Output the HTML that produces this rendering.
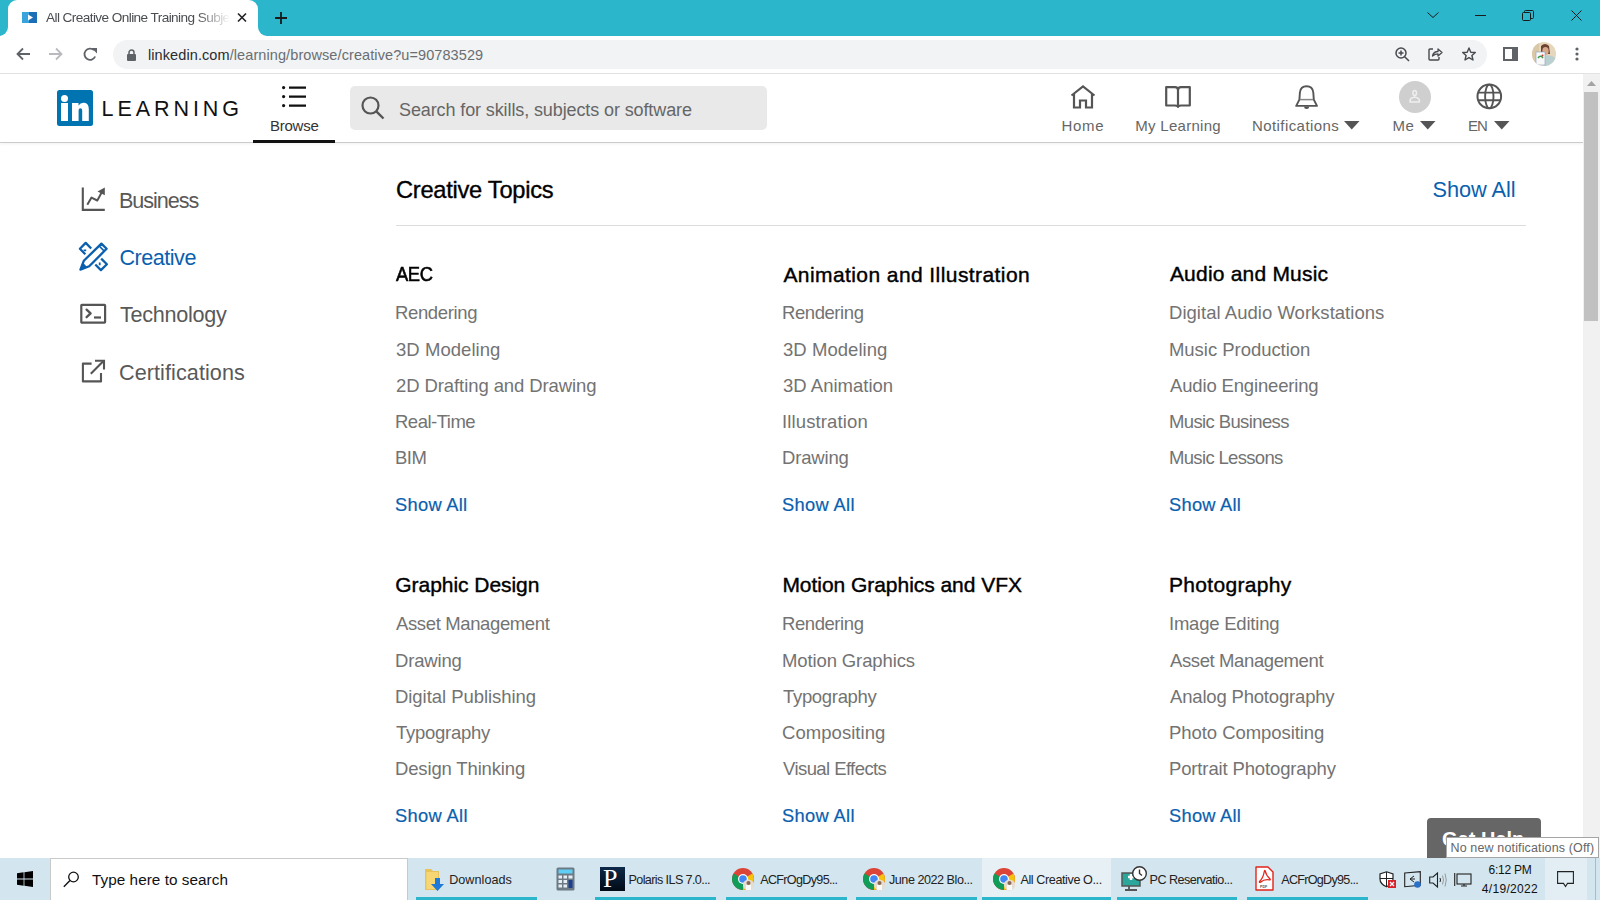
<!DOCTYPE html>
<html><head><meta charset="utf-8">
<style>
*{margin:0;padding:0;box-sizing:border-box}
html,body{width:1600px;height:900px;overflow:hidden;background:#fff;font-family:"Liberation Sans",sans-serif}
.a{position:absolute;white-space:nowrap}
svg{position:absolute;overflow:visible}
/* chrome */
#tabbar{position:absolute;left:0;top:0;width:1600px;height:36px;background:#2bb6cc}
#tab{position:absolute;left:8px;top:0;width:250px;height:36px;background:#fff;border-radius:9px 9px 0 0}
.foot{position:absolute;top:27px;width:9px;height:9px;background:#fff}
.foot i{position:absolute;left:0;top:0;width:9px;height:9px;background:#2bb6cc}
#toolbar{position:absolute;left:0;top:36px;width:1600px;height:38px;background:#fff;border-bottom:1px solid #e2e3e5}
#omni{position:absolute;left:113px;top:40px;width:1374px;height:29px;background:#f1f3f4;border-radius:14.5px}
/* header */
#hdr{position:absolute;left:0;top:74px;width:1583px;height:69px;background:#fff;border-bottom:1px solid #cbcbcb;box-shadow:0 1px 3px rgba(0,0,0,.06)}
.nav{color:#666;font-size:15px;line-height:15px}
.side{color:#595959;font-size:21.6px;line-height:22px}
.h1{color:#000;font-size:23.7px;line-height:24px;-webkit-text-stroke:.35px #000}
.h2{color:#000;font-size:21px;line-height:21px;-webkit-text-stroke:.4px #000}
.it{color:#737373;font-size:18.5px;line-height:19px}
.sa{color:#0a5fae;font-size:18.3px;line-height:19px;-webkit-text-stroke:.2px #0a5fae}
/* taskbar */
#task{position:absolute;left:0;top:858px;width:1600px;height:42px;background:#d3e5ee}
.tb{color:#222;font-size:12.6px;line-height:13px}
.ul{position:absolute;top:897px;height:3px;background:#2bb6cc}
</style></head><body>

<!-- ===== Chrome tab bar ===== -->
<div id="tabbar"></div>
<div id="tab"></div>
<div class="foot" style="left:-1px"><i style="border-radius:0 0 9px 0"></i></div>
<div class="foot" style="left:258px"><i style="border-radius:0 0 0 9px"></i></div>
<!-- favicon -->
<div class="a" style="left:22px;top:12px;width:15px;height:11px;background:linear-gradient(90deg,#3aa3dc 0 50%,#1c6fb6 50%)"></div>
<svg style="left:22px;top:12px" width="15" height="11"><path d="M6 2.5 L11 5.5 L6 8.5Z" fill="#fff"/></svg>
<div id="tabt" class="a" style="left:46px;top:9.6px;font-size:13.6px;line-height:15px;color:#4a4d51;width:184px;overflow:hidden;letter-spacing:-0.58px;-webkit-mask-image:linear-gradient(90deg,#000 82%,transparent)"><span id="tabt2">All Creative Online Training</span> Subjects</div>
<svg style="left:237px;top:13px" width="10" height="9"><path d="M1 0.5 L9 8.5 M9 0.5 L1 8.5" stroke="#202124" stroke-width="1.6"/></svg>
<svg style="left:275px;top:12px" width="12" height="12"><path d="M6 0 V12 M0 6 H12" stroke="#1a1a1a" stroke-width="1.8"/></svg>
<!-- window controls -->
<svg style="left:1427px;top:12px" width="12" height="6"><path d="M0.5 0.5 L6 5.5 L11.5 0.5" stroke="#1a1a1a" stroke-width="1" fill="none"/></svg>
<div class="a" style="left:1475px;top:15px;width:11px;height:1px;background:#1a1a1a"></div>
<svg style="left:1522px;top:10px" width="12" height="11"><rect x="0.5" y="2.5" width="8" height="8" rx="1" stroke="#1a1a1a" fill="none"/><path d="M2.5 2.5 V1.5 Q2.5 0.5 3.5 0.5 H10.5 Q11.5 0.5 11.5 1.5 V7.5 Q11.5 8.5 10.5 8.5 H8.5" stroke="#1a1a1a" fill="none"/></svg>
<svg style="left:1571px;top:10px" width="11" height="11"><path d="M0.5 0.5 L10.5 10.5 M10.5 0.5 L0.5 10.5" stroke="#1a1a1a" stroke-width="1"/></svg>

<!-- ===== Toolbar ===== -->
<div id="toolbar"></div>
<svg style="left:16px;top:47px" width="14" height="14"><path d="M14 7 H2 M7 1.5 L1.5 7 L7 12.5" stroke="#5f6368" stroke-width="1.8" fill="none"/></svg>
<svg style="left:49px;top:47px" width="14" height="14"><path d="M0 7 H12 M7 1.5 L12.5 7 L7 12.5" stroke="#b8babd" stroke-width="1.8" fill="none"/></svg>
<svg style="left:83px;top:47px" width="15" height="15"><path d="M12.2 9.5 A5.6 5.6 0 1 1 11 3.2" stroke="#5f6368" stroke-width="1.8" fill="none"/><path d="M8.5 1 H14 V6.5Z" fill="#5f6368"/></svg>
<div id="omni"></div>
<svg style="left:127px;top:49px" width="9" height="12"><path d="M2 5 V3.5 A2.5 2.5 0 0 1 7 3.5 V5" stroke="#5f6368" stroke-width="1.5" fill="none"/><rect x="0" y="5" width="9" height="7" rx="1" fill="#5f6368"/></svg>
<div id="url" class="a" style="left:148.00px;top:47.00px;font-size:14.5px;line-height:16px;color:#2a2c2f;letter-spacing:0.09px">linkedin.com<span style="color:#6a6e72">/learning/browse/creative?u=90783529</span></div>
<!-- right toolbar icons -->
<svg style="left:1395px;top:47px" width="15" height="15"><circle cx="6" cy="6" r="5" stroke="#474a4e" stroke-width="1.5" fill="none"/><path d="M6 3.5 V8.5 M3.5 6 H8.5 M9.7 9.7 L14 14" stroke="#474a4e" stroke-width="1.5"/></svg>
<svg style="left:1428px;top:47px" width="15" height="14"><path d="M5 2 H2 Q1 2 1 3 V12 Q1 13 2 13 H10 Q11 13 11 12 V10" stroke="#474a4e" stroke-width="1.4" fill="none"/><path d="M4.5 9 Q5.5 4.5 10 4.5 V2 L14 5.5 L10 9 V6.8 Q7 6.8 4.5 9Z" stroke="#474a4e" stroke-width="1.3" fill="none" stroke-linejoin="round"/></svg>
<svg style="left:1462px;top:47px" width="14" height="14"><path d="M7 1 L8.8 5.2 L13.3 5.5 L9.9 8.5 L11 13 L7 10.6 L3 13 L4.1 8.5 L0.7 5.5 L5.2 5.2Z" stroke="#474a4e" stroke-width="1.4" fill="none" stroke-linejoin="round"/></svg>
<svg style="left:1503px;top:47px" width="15" height="14"><rect x="1" y="1" width="13" height="12" stroke="#5f6368" stroke-width="2" fill="none"/><rect x="9" y="1" width="5" height="12" fill="#5f6368"/></svg>
<svg style="left:1532px;top:42px" width="24" height="24"><defs><clipPath id="av"><circle cx="12" cy="12" r="12"/></clipPath></defs><g clip-path="url(#av)"><rect width="24" height="24" fill="#e6d6bb"/><rect x="0" y="0" width="7" height="24" fill="#d9c7a6"/><path d="M9 4 Q13 0 17 4 L18 12 L9 12Z" fill="#6b4330"/><ellipse cx="13.5" cy="9" rx="3.2" ry="4" fill="#d9a88a"/><path d="M12 14 Q18 12 24 16 V24 H12Z" fill="#b9cfd0"/><rect x="4" y="10" width="9" height="13" fill="#f8f8f8" stroke="#8aa0c0" stroke-width="0.6"/><path d="M6 16 Q8.5 12.5 11 16" stroke="#3f9a4a" stroke-width="1.5" fill="none"/><circle cx="10.5" cy="13.5" r="1" fill="#c33"/></g></svg>
<svg style="left:1575px;top:47px" width="4" height="14"><circle cx="2" cy="2" r="1.6" fill="#5f6368"/><circle cx="2" cy="7" r="1.6" fill="#5f6368"/><circle cx="2" cy="12" r="1.6" fill="#5f6368"/></svg>

<!-- ===== LinkedIn header ===== -->
<div id="hdr"></div>
<div class="a" style="left:57px;top:90px;width:36px;height:36px;background:#0073b1;border-radius:2.5px"></div>
<div class="a" style="left:61px;top:95px;width:7px;height:7px;border-radius:50%;background:#fff"></div>
<div class="a" style="left:61px;top:103px;width:7px;height:18px;background:#fff"></div>
<svg style="left:72px;top:102px" width="17" height="19"><path d="M0 1 H6.5 V3.5 Q8.5 0.5 12 0.8 Q16.8 1.2 16.8 7 V19 H10.2 V8.5 Q10.2 6.2 8.3 6.2 Q6.6 6.2 6.6 8.5 V19 H0Z" fill="#fff"/></svg>
<div id="learning" class="a" style="left:101.50px;top:97.10px;font-size:21.5px;line-height:24px;color:#111;letter-spacing:3.94px">LEARNING</div>
<!-- browse -->
<svg style="left:282px;top:86px" width="24" height="22"><circle cx="1.6" cy="1.6" r="1.6" fill="#111"/><circle cx="1.6" cy="10.6" r="1.6" fill="#111"/><circle cx="1.6" cy="19.6" r="1.6" fill="#111"/><path d="M7 1.6 H24 M7 10.6 H24 M7 19.6 H24" stroke="#111" stroke-width="2.2"/></svg>
<div id="browse" class="a nav" style="left:270.00px;top:117.60px;color:#333;letter-spacing:-0.25px">Browse</div>
<div class="a" style="left:253px;top:140px;width:82px;height:2.5px;background:#111"></div>
<!-- search -->
<div class="a" style="left:350px;top:86px;width:417px;height:44px;background:#e9e9e9;border-radius:5px"></div>
<svg style="left:361px;top:96px" width="24" height="24"><circle cx="9.5" cy="9.5" r="8" stroke="#555" stroke-width="2.2" fill="none"/><path d="M15.3 15.3 L22.5 22.5" stroke="#555" stroke-width="2.4"/></svg>
<div id="search" class="a" style="left:399.00px;top:100.60px;font-size:18px;line-height:19px;color:#666;letter-spacing:-0.11px">Search for skills, subjects or software</div>
<!-- right nav -->
<svg style="left:1070px;top:85px" width="26" height="24"><path d="M1.5 10.5 L13 1.5 L24.5 10.5 M4 8.5 V22.5 H10 V15.5 H16 V22.5 H22 V8.5" stroke="#555" stroke-width="2.2" fill="none" stroke-linejoin="miter"/></svg>
<div id="home" class="a nav" style="left:1061.50px;top:117.60px;letter-spacing:0.67px">Home</div>
<svg style="left:1165px;top:86px" width="26" height="22"><path d="M1.2 1.2 H10 Q13 1.2 13 4 V21 Q13 19.5 10 19.5 H1.2Z M24.8 1.2 H16 Q13 1.2 13 4 V21 Q13 19.5 16 19.5 H24.8Z" stroke="#555" stroke-width="2.2" fill="none" stroke-linejoin="round"/></svg>
<div id="myl" class="a nav" style="left:1135.25px;top:117.60px;letter-spacing:0.29px">My Learning</div>
<svg style="left:1295px;top:85px" width="24" height="25"><path d="M4.4 14.6 L4.9 7.5 Q5.6 1.3 11.6 1.3 Q17.6 1.3 18.3 7.5 L18.8 14.6 L22 20.9 H1.2 Z" stroke="#555" stroke-width="1.9" fill="none" stroke-linejoin="round"/><path d="M5 14.6 H18.2" stroke="#888" stroke-width="1.5"/><path d="M9.1 21.6 A2.5 2.5 0 0 0 14.1 21.6 Z" fill="#555"/></svg>
<div id="notif" class="a nav" style="left:1252.00px;top:117.60px;letter-spacing:0.42px">Notifications</div>
<svg style="left:1344px;top:121px" width="16" height="9"><path d="M0 0 H15.5 L7.75 8.5Z" fill="#555"/></svg>
<div class="a" style="left:1399px;top:81px;width:32px;height:32px;border-radius:50%;background:#cfcfcf"></div>
<svg style="left:1399px;top:81px" width="32" height="32"><ellipse cx="15.7" cy="12.1" rx="1.8" ry="2.5" stroke="#efefef" stroke-width="1.5" fill="none"/><path d="M11 21 Q10.6 17.5 13.5 16.6 L15.7 16 L17.9 16.6 Q20.8 17.5 20.4 21Z" stroke="#efefef" stroke-width="1.5" fill="none" stroke-linejoin="round"/></svg>
<div id="me" class="a nav" style="left:1392.50px;top:117.60px;letter-spacing:0.50px">Me</div>
<svg style="left:1420px;top:121px" width="16" height="9"><path d="M0 0 H15.5 L7.75 8.5Z" fill="#555"/></svg>
<svg style="left:1476px;top:83px" width="27" height="27"><circle cx="13.3" cy="13.4" r="11.8" stroke="#555" stroke-width="2" fill="none"/><ellipse cx="13.3" cy="13.4" rx="4.2" ry="11.8" stroke="#555" stroke-width="1.9" fill="none"/><path d="M2.2 9.6 H24.4 M2.2 17.2 H24.4" stroke="#555" stroke-width="1.9"/></svg>
<div id="en" class="a nav" style="left:1468.00px;top:117.60px;letter-spacing:-1.00px">EN</div>
<svg style="left:1494px;top:121px" width="16" height="9"><path d="M0 0 H15.5 L7.75 8.5Z" fill="#555"/></svg>

<!-- scrollbar -->
<div class="a" style="left:1583px;top:74px;width:17px;height:784px;background:#f1f1f1"></div>
<svg style="left:1587px;top:81px" width="9" height="5"><path d="M0 5 L4.5 0 L9 5Z" fill="#a3a3a3"/></svg>
<div class="a" style="left:1584px;top:92px;width:14px;height:229px;background:#c1c1c1"></div>

<!-- ===== Sidebar ===== -->
<svg style="left:81px;top:187px" width="25" height="24"><path d="M1.8 0.6 V22.9 H23.8" stroke="#555" stroke-width="2.1" fill="none"/><path d="M6.3 17.8 L10.5 10.6 L16.3 13.5 L20.5 5.8" stroke="#555" stroke-width="2" fill="none" stroke-linejoin="round"/><path d="M16.5 4.4 L23.8 0.4 L23.8 8.2 Z" fill="#555"/></svg>
<div id="s_bus" class="a side" style="left:119.00px;top:189.75px;letter-spacing:-1.05px">Business</div>
<svg style="left:76px;top:238px" width="36" height="38"><g stroke="#0a5fae" stroke-width="2.3" fill="none" stroke-linejoin="round"><path d="M15.2 10.5 L9.7 4.9 L3.9 10.8 L9.3 16.3"/><path d="M25.2 20.6 L30.9 26.2 L24.9 32.1 L19.3 26.5"/><path d="M7.6 12.4 H10.2 M23.7 24.6 V27.3" stroke-width="1.8"/><path d="M25.4 5.6 L30.6 10.8 L13.2 28.2 L4.4 31.6 L7.8 22.8 Z"/><path d="M23.2 8 L28.3 13.1" stroke-width="1.6"/></g><path d="M4.2 31.8 L6.8 24.6 L11.4 29.2 Z" fill="#0a5fae"/></svg>
<div id="s_cre" class="a side" style="left:119.50px;top:247.00px;color:#0a5fae;letter-spacing:-0.50px">Creative</div>
<svg style="left:80px;top:303px" width="27" height="22"><rect x="1.3" y="1.8" width="23.8" height="17.8" rx="0.6" stroke="#555" stroke-width="2.2" fill="none"/><path d="M6.6 6.6 L10.6 10.4 L6.6 14.2" stroke="#555" stroke-width="2.3" fill="none" stroke-linecap="round" stroke-linejoin="round"/><path d="M14 14.5 H21" stroke="#555" stroke-width="2.2"/></svg>
<div id="s_tec" class="a side" style="left:120.00px;top:304.25px;letter-spacing:-0.28px">Technology</div>
<svg style="left:82px;top:360px" width="24" height="24"><path d="M9.6 3.6 H0.9 V21.4 H19 V13" stroke="#555" stroke-width="2.1" fill="none" stroke-linejoin="round"/><path d="M8.8 13.8 L21 1.6" stroke="#555" stroke-width="2.1"/><path d="M13 0.7 H22 V9.6" stroke="#555" stroke-width="2.1" fill="none"/></svg>
<div id="s_cer" class="a side" style="left:119.00px;top:361.75px;letter-spacing:0.08px">Certifications</div>

<!-- ===== Main ===== -->
<div id="ctopics" class="a h1" style="left:396.00px;top:178.30px;letter-spacing:-0.28px">Creative Topics</div>
<div id="satop" class="a" style="left:1432.50px;top:179.10px;font-size:21.8px;line-height:22px;color:#0a5fae;letter-spacing:-0.09px">Show All</div>
<div class="a" style="left:396px;top:225px;width:1130px;height:1px;background:#dcdcdc"></div>

<div id="cols">
<div id="h0" class="a h2" style="left:396px;top:263.30px;letter-spacing:-0.5px;transform:scaleX(0.875);transform-origin:0 0;-webkit-text-stroke:.6px #000">AEC</div>
<div id="i0_0" class="a it" style="left:395.00px;top:303.40px;letter-spacing:-0.36px">Rendering</div>
<div id="i0_1" class="a it" style="left:396.00px;top:339.51px;letter-spacing:0.05px">3D Modeling</div>
<div id="i0_2" class="a it" style="left:396.00px;top:375.61px;letter-spacing:-0.09px">2D Drafting and Drawing</div>
<div id="i0_3" class="a it" style="left:395.00px;top:411.71px;letter-spacing:-0.50px">Real-Time</div>
<div id="i0_4" class="a it" style="left:395.00px;top:447.80px;letter-spacing:-0.50px">BIM</div>
<div id="sa0" class="a sa" style="left:395.00px;top:494.61px;letter-spacing:0.29px">Show All</div>
<div id="h1" class="a h2" style="left:783.40px;top:263.50px;letter-spacing:0.42px">Animation and Illustration</div>
<div id="i1_0" class="a it" style="left:782.00px;top:303.40px;letter-spacing:-0.43px">Rendering</div>
<div id="i1_1" class="a it" style="left:783.00px;top:339.51px;letter-spacing:0.05px">3D Modeling</div>
<div id="i1_2" class="a it" style="left:783.00px;top:375.61px;letter-spacing:0.01px">3D Animation</div>
<div id="i1_3" class="a it" style="left:782.00px;top:411.71px;letter-spacing:0.13px">Illustration</div>
<div id="i1_4" class="a it" style="left:782.00px;top:447.80px;letter-spacing:-0.18px">Drawing</div>
<div id="sa1" class="a sa" style="left:782.00px;top:494.61px;letter-spacing:0.35px">Show All</div>
<div id="h2" class="a h2" style="left:1169.90px;top:263.40px;letter-spacing:0.21px">Audio and Music</div>
<div id="i2_0" class="a it" style="left:1169.00px;top:303.40px;letter-spacing:0.03px">Digital Audio Workstations</div>
<div id="i2_1" class="a it" style="left:1169.00px;top:339.51px;letter-spacing:-0.04px">Music Production</div>
<div id="i2_2" class="a it" style="left:1170.00px;top:375.61px;letter-spacing:-0.16px">Audio Engineering</div>
<div id="i2_3" class="a it" style="left:1169.00px;top:411.71px;letter-spacing:-0.62px">Music Business</div>
<div id="i2_4" class="a it" style="left:1169.00px;top:447.80px;letter-spacing:-0.67px">Music Lessons</div>
<div id="sa2" class="a sa" style="left:1169.00px;top:494.61px;letter-spacing:0.26px">Show All</div>
<div id="h3" class="a h2" style="left:395.30px;top:574.21px;letter-spacing:-0.05px">Graphic Design</div>
<div id="i3_0" class="a it" style="left:396.00px;top:614.40px;letter-spacing:-0.37px">Asset Management</div>
<div id="i3_1" class="a it" style="left:395.00px;top:650.51px;letter-spacing:-0.18px">Drawing</div>
<div id="i3_2" class="a it" style="left:395.00px;top:686.61px;letter-spacing:-0.05px">Digital Publishing</div>
<div id="i3_3" class="a it" style="left:396.00px;top:722.71px;letter-spacing:-0.28px">Typography</div>
<div id="i3_4" class="a it" style="left:395.00px;top:758.80px;letter-spacing:-0.15px">Design Thinking</div>
<div id="sa3" class="a sa" style="left:395.00px;top:805.61px;letter-spacing:0.35px">Show All</div>
<div id="h4" class="a h2" style="left:782.40px;top:574.21px;letter-spacing:-0.04px">Motion Graphics and VFX</div>
<div id="i4_0" class="a it" style="left:782.00px;top:614.40px;letter-spacing:-0.43px">Rendering</div>
<div id="i4_1" class="a it" style="left:782.00px;top:650.51px;letter-spacing:-0.12px">Motion Graphics</div>
<div id="i4_2" class="a it" style="left:783.00px;top:686.61px;letter-spacing:-0.32px">Typography</div>
<div id="i4_3" class="a it" style="left:782.00px;top:722.71px;letter-spacing:0.05px">Compositing</div>
<div id="i4_4" class="a it" style="left:783.00px;top:758.80px;letter-spacing:-0.58px">Visual Effects</div>
<div id="sa4" class="a sa" style="left:782.00px;top:805.61px;letter-spacing:0.35px">Show All</div>
<div id="h5" class="a h2" style="left:1168.90px;top:574.21px;letter-spacing:0.33px">Photography</div>
<div id="i5_0" class="a it" style="left:1169.00px;top:614.40px;letter-spacing:-0.22px">Image Editing</div>
<div id="i5_1" class="a it" style="left:1170.00px;top:650.51px;letter-spacing:-0.39px">Asset Management</div>
<div id="i5_2" class="a it" style="left:1170.00px;top:686.61px;letter-spacing:-0.18px">Analog Photography</div>
<div id="i5_3" class="a it" style="left:1169.00px;top:722.71px;letter-spacing:-0.06px">Photo Compositing</div>
<div id="i5_4" class="a it" style="left:1169.00px;top:758.80px;letter-spacing:-0.14px">Portrait Photography</div>
<div id="sa5" class="a sa" style="left:1169.00px;top:805.61px;letter-spacing:0.26px">Show All</div>
</div><!--endcols-->

<!-- Get help + tooltip -->
<div class="a" style="left:1427px;top:818px;width:114px;height:40px;background:#666;border-radius:4px 4px 0 0"></div>
<div class="a" style="left:1442px;top:829px;font-size:20px;line-height:20px;color:#fff;font-weight:bold">Get Help</div>

<!-- ===== Taskbar ===== -->
<div id="task"></div>
<svg style="left:17px;top:871px" width="16" height="16"><path d="M0 2.2 L6.6 1.3 V7.5 H0Z M7.4 1.2 L16 0 V7.5 H7.4Z M0 8.5 H6.6 V14.7 L0 13.8Z M7.4 8.5 H16 V16 L7.4 14.8Z" fill="#000"/></svg>
<div class="a" style="left:50px;top:858px;width:358px;height:42px;background:#fff;border:1px solid #c9c9c9;border-bottom:none"></div>
<svg style="left:63px;top:871px" width="17" height="17"><circle cx="10.5" cy="6" r="4.8" stroke="#111" stroke-width="1.3" fill="none"/><path d="M7 9.5 L0.8 15.7" stroke="#111" stroke-width="1.4"/></svg>
<div id="tsearch" class="a" style="left:92.00px;top:871.50px;font-size:15.3px;line-height:16px;color:#111;letter-spacing:0.04px">Type here to search</div>
<!-- downloads -->
<svg style="left:425px;top:868px" width="20" height="24"><path d="M0 1 H6 L8 3 H14 V22 H0Z" fill="#e8c35a"/><path d="M1.5 4 H13 V21 H1.5Z" fill="#f7d774"/><path d="M10 10 H15 V16 H19 L12.5 23 L6 16 H10Z" fill="#1e7ad6"/></svg>
<div id="tb_dl" class="a tb" style="left:449.20px;top:873.71px;letter-spacing:0.04px">Downloads</div>
<div class="ul" style="left:416px;width:121px"></div>
<!-- calculator -->
<svg style="left:556px;top:867px" width="19" height="24"><rect x="0.5" y="0.5" width="18" height="23" rx="1.5" fill="#6d7a86"/><rect x="2.5" y="2.5" width="14" height="4" fill="#5fd0f5"/><g fill="#e6eef3"><rect x="2.5" y="8.5" width="3.5" height="3"/><rect x="7.5" y="8.5" width="3.5" height="3"/><rect x="12.5" y="8.5" width="4" height="3"/><rect x="2.5" y="13" width="3.5" height="3"/><rect x="7.5" y="13" width="3.5" height="3"/><rect x="2.5" y="17.5" width="3.5" height="3"/><rect x="7.5" y="17.5" width="3.5" height="3"/></g><rect x="12.5" y="13" width="4" height="8" fill="#1b3f8c"/></svg>
<!-- polaris -->
<div class="a" style="left:600px;top:867px;width:25px;height:24px;background:linear-gradient(180deg,#0d2a4a,#010a16)"></div>
<div class="a" style="left:603px;top:864px;font-family:'Liberation Serif',serif;font-size:26px;line-height:30px;color:#fff">P</div>
<div id="tb_pol" class="a tb" style="left:628.50px;top:873.71px;letter-spacing:-0.61px">Polaris ILS 7.0...</div>
<div class="ul" style="left:595px;width:121px"></div>
<!-- chrome apps -->
<svg style="left:731px;top:867px" width="24" height="24"><circle cx="12" cy="12" r="11" fill="#db4437"/><path d="M12 12 L2.5 6.5 A11 11 0 0 0 12 23Z" fill="#0f9d58"/><path d="M12 12 L12 23 A11 11 0 0 0 21.5 6.5Z" fill="#f4c20d"/><circle cx="12" cy="12" r="5" fill="#fff"/><circle cx="12" cy="12" r="3.8" fill="#4285f4"/><circle cx="17.5" cy="18" r="5.5" fill="#e6dccf"/><circle cx="17.5" cy="16" r="2" fill="#8a6a55"/><rect x="15" y="18" width="5" height="5" fill="#fafafa"/></svg>
<div id="tb_ac1" class="a tb" style="left:760.20px;top:873.71px;letter-spacing:-0.68px">ACFrOgDy95...</div>
<div class="ul" style="left:726px;width:121px"></div>
<svg style="left:862px;top:867px" width="24" height="24"><circle cx="12" cy="12" r="11" fill="#db4437"/><path d="M12 12 L2.5 6.5 A11 11 0 0 0 12 23Z" fill="#0f9d58"/><path d="M12 12 L12 23 A11 11 0 0 0 21.5 6.5Z" fill="#f4c20d"/><circle cx="12" cy="12" r="5" fill="#fff"/><circle cx="12" cy="12" r="3.8" fill="#4285f4"/><circle cx="17.5" cy="18" r="5.5" fill="#e6dccf"/><circle cx="17.5" cy="16" r="2" fill="#8a6a55"/><rect x="15" y="18" width="5" height="5" fill="#fafafa"/></svg>
<div id="tb_jun" class="a tb" style="left:889.00px;top:873.71px;letter-spacing:-0.47px">June 2022 Blo...</div>
<div class="ul" style="left:856px;width:121px"></div>
<div class="a" style="left:982px;top:858px;width:129px;height:42px;background:#e6f0f5"></div>
<svg style="left:992px;top:867px" width="24" height="24"><circle cx="12" cy="12" r="11" fill="#db4437"/><path d="M12 12 L2.5 6.5 A11 11 0 0 0 12 23Z" fill="#0f9d58"/><path d="M12 12 L12 23 A11 11 0 0 0 21.5 6.5Z" fill="#f4c20d"/><circle cx="12" cy="12" r="5" fill="#fff"/><circle cx="12" cy="12" r="3.8" fill="#4285f4"/><circle cx="17.5" cy="18" r="5.5" fill="#e6dccf"/><circle cx="17.5" cy="16" r="2" fill="#8a6a55"/><rect x="15" y="18" width="5" height="5" fill="#fafafa"/></svg>
<div id="tb_all" class="a tb" style="left:1020.40px;top:873.60px;letter-spacing:-0.40px">All Creative O...</div>
<div class="ul" style="left:982px;width:129px"></div>
<!-- pc reservation -->
<svg style="left:1121px;top:866px" width="26" height="26"><rect x="1" y="7" width="18" height="13" fill="#2aa79a" stroke="#555" stroke-width="1.5"/><path d="M7 11 H13 M10 8 V14" stroke="#fff" stroke-width="2.5"/><path d="M8 20 V23 M4 24 H16" stroke="#555" stroke-width="1.8"/><circle cx="18.5" cy="7.5" r="6.8" fill="#fff" stroke="#333" stroke-width="1.4"/><path d="M18.5 3.5 V7.5 L21 9.5" stroke="#333" stroke-width="1.4" fill="none"/></svg>
<div id="tb_pc" class="a tb" style="left:1149.60px;top:873.71px;letter-spacing:-0.55px">PC Reservatio...</div>
<div class="ul" style="left:1117px;width:120px"></div>
<!-- pdf -->
<svg style="left:1255px;top:866px" width="19" height="25"><path d="M1 1 H13 L18 6 V24 H1Z" fill="#fff" stroke="#e1251b" stroke-width="1.4" stroke-linejoin="round"/><path d="M4.5 15.5 Q8 12.5 9.3 5.5 Q9.6 3.8 10.3 5 Q10.8 9 15 13 Q15.8 14 14.3 13.8 Q9 13 5.5 16.2 Q4 17 4.5 15.5Z" fill="none" stroke="#e1251b" stroke-width="1.3" stroke-linejoin="round"/><text x="5" y="21.5" font-size="3.6" fill="#555" font-family="Liberation Sans" font-weight="bold">PDF</text></svg>
<div id="tb_ac2" class="a tb" style="left:1281.20px;top:873.71px;letter-spacing:-0.71px">ACFrOgDy95...</div>
<div class="ul" style="left:1247px;width:121px"></div>
<!-- systray -->
<svg style="left:1379px;top:871px" width="18" height="17"><path d="M7.5 0.8 L14 3 V8 Q14 13 7.5 15.8 Q1 13 1 8 V3Z" fill="#fff" stroke="#222" stroke-width="1.2"/><path d="M7.5 1 V15.5 M1 7.5 H14" stroke="#222" stroke-width="1"/><rect x="9" y="9" width="8" height="8" fill="#d9202a"/><path d="M11 11 L15 15 M15 11 L11 15" stroke="#fff" stroke-width="1.3"/></svg>
<svg style="left:1404px;top:871px" width="18" height="17"><path d="M0.7 2 L16.3 0.7 V14.3 L0.7 15.7Z" fill="none" stroke="#222" stroke-width="1.1"/><path d="M10 5 L6 8 L10 11 M6 8 H11" stroke="#222" stroke-width="1" fill="none"/><circle cx="13.5" cy="13.5" r="3.3" fill="#2870c9"/></svg>
<svg style="left:1429px;top:872px" width="18" height="16"><path d="M0.7 5 H4 L8.5 1 V15 L4 11 H0.7Z" fill="none" stroke="#222" stroke-width="1.1"/><path d="M11 6 Q12 8 11 10" stroke="#222" stroke-width="1" fill="none"/><path d="M13.5 3.5 Q15.5 8 13.5 12.5 M16 1.5 Q18.5 8 16 14.5" stroke="#999" stroke-width="1" fill="none"/></svg>
<svg style="left:1454px;top:873px" width="18" height="14"><rect x="3" y="1" width="14" height="10" fill="none" stroke="#222" stroke-width="1.1"/><path d="M0.7 0 V13 M7 13 H13 M10 11 V13" stroke="#222" stroke-width="1.1"/></svg>
<div id="time" class="a" style="left:1488.50px;top:863.75px;font-size:12px;line-height:13px;color:#111;letter-spacing:-0.25px">6:12 PM</div>
<div id="date" class="a" style="left:1481.70px;top:882.75px;font-size:12px;line-height:13px;color:#111;letter-spacing:0.34px">4/19/2022</div>
<div class="a" style="left:1545px;top:858px;width:42px;height:42px;background:#e2eef4"></div>
<svg style="left:1557px;top:871px" width="18" height="17"><path d="M0.6 0.6 H16.4 V12.4 H10.5 L8.5 15.5 L6.5 12.4 H0.6Z" fill="none" stroke="#222" stroke-width="1.1"/></svg>
<div class="a" style="left:1595px;top:858px;width:1px;height:42px;background:#a9bcc6"></div>
<!-- tooltip -->
<div class="a" style="left:1446px;top:837px;width:153px;height:21px;background:#fff;border:1px solid #a5a5a5"></div>
<div id="tip" class="a" style="left:1450.50px;top:841.25px;font-size:12.5px;line-height:15px;color:#666;letter-spacing:0.14px">No new notifications (Off)</div>

</body></html>
